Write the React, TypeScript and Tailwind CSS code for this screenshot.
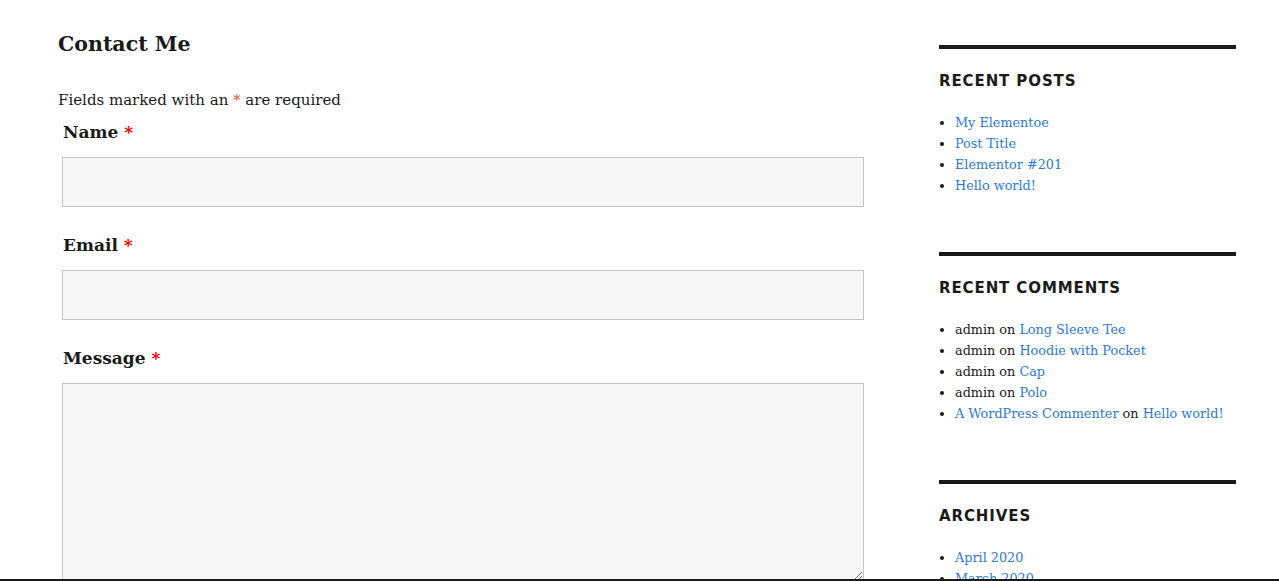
import React from "react";

const serif = { fontFamily: '"DejaVu Serif", "Liberation Serif", serif' };

function Field({ label, tall }: { label: string; tall?: boolean }) {
  return (
    <div className="ml-[4px]">
      <div className="pl-[1px] text-[17px] font-bold leading-[26px] text-[#1a1a1a]">
        {label} <span className="text-[#ee0000]">*</span>
      </div>
      {tall ? (
        <textarea
          aria-label={label}
          className="mt-[12px] block h-[198px] w-[802px] resize border border-[#c4c4c4] bg-[#f7f7f7] outline-none"
        />
      ) : (
        <input
          aria-label={label}
          className="mt-[12px] block h-[50px] w-[802px] border border-[#c4c4c4] bg-[#f7f7f7] outline-none"
        />
      )}
    </div>
  );
}

function Widget({ title, children }: { title: string; children: React.ReactNode }) {
  return (
    <section className="border-t-4 border-[#1a1a1a]">
      <h2
        className="mt-[21px] text-[15px] font-bold uppercase leading-[22px] tracking-[0.06em] text-[#1a1a1a]"
        style={{ fontFamily: '"DejaVu Sans", "Open Sans", sans-serif' }}
      >
        {title}
      </h2>
      <ul className="mt-[20px] list-disc pl-[16px] text-[12.8px] leading-[21px] text-[#1a1a1a]" style={serif}>
        {children}
      </ul>
    </section>
  );
}

const A = ({ children }: { children: React.ReactNode }) => <a className="text-[#2b7bd1]">{children}</a>;

export default function App() {
  return (
    <div className="relative h-[581px] w-[1279px] overflow-hidden bg-white text-[#1a1a1a]" style={serif}>
      <div className="flex pl-[58px] pt-[29px]">
        <main className="w-[806px]">
          <h1 className="text-[20.5px] font-bold leading-[30px]">Contact Me</h1>
          <p className="mt-[29px] text-[15px] leading-[24px]">
            Fields marked with an <span className="text-[#ec5130]">*</span> are required
          </p>
          <div className="mt-[7px] flex flex-col gap-[25px]">
            <Field label="Name" />
            <Field label="Email" />
            <Field label="Message" tall />
          </div>
        </main>
        <aside className="ml-[75px] mt-[16px] flex w-[297px] flex-col gap-[56px]">
          <Widget title="Recent Posts">
            <li><A>My Elementoe</A></li>
            <li><A>Post Title</A></li>
            <li><A>Elementor #201</A></li>
            <li><A>Hello world!</A></li>
          </Widget>
          <Widget title="Recent Comments">
            <li>admin on <A>Long Sleeve Tee</A></li>
            <li>admin on <A>Hoodie with Pocket</A></li>
            <li>admin on <A>Cap</A></li>
            <li>admin on <A>Polo</A></li>
            <li><A>A WordPress Commenter</A> on <A>Hello world!</A></li>
          </Widget>
          <Widget title="Archives">
            <li><A>April 2020</A></li>
            <li><A>March 2020</A></li>
          </Widget>
        </aside>
      </div>
      <div className="absolute bottom-0 left-0 h-[2px] w-full bg-[#1a1a1a]" />
    </div>
  );
}
